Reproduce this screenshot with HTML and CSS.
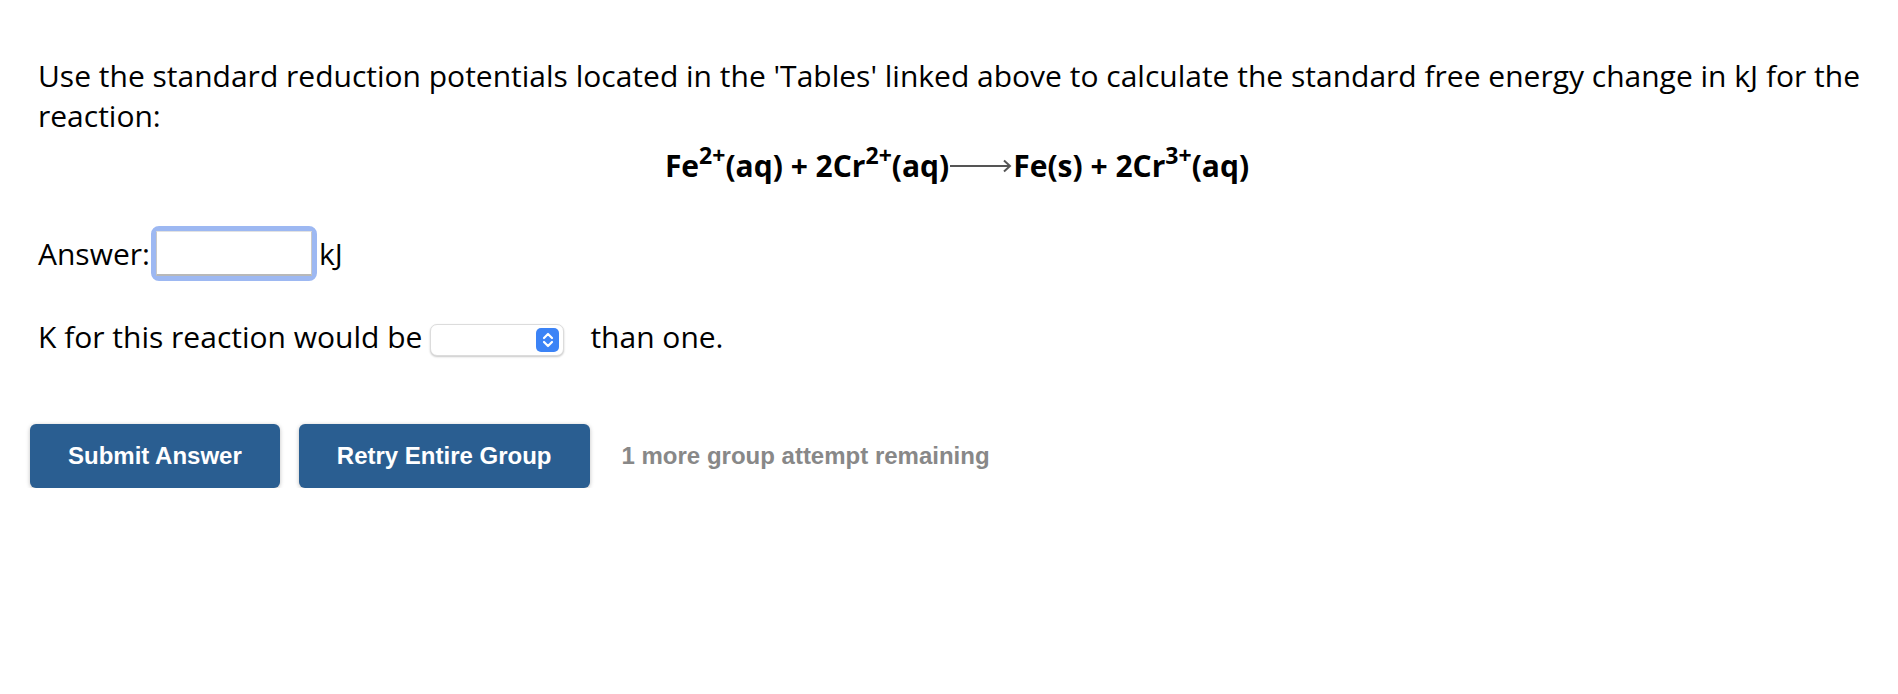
FILE: index.html
```html
<!DOCTYPE html>
<html lang="en">
<head>
<meta charset="utf-8">
<title>Question</title>
<link rel="stylesheet" href="styles.css">
</head>
<body>
<div class="page">
  <div class="question">
    <p class="prompt">Use the standard reduction potentials located in the 'Tables' linked above to calculate the standard free energy change in kJ for the reaction:</p>
    <div class="equation">Fe<sup>2+</sup>(aq) + 2Cr<sup>2+</sup>(aq)<svg class="arrow" width="62" height="14" viewBox="0 0 62 14"><line x1="0" y1="7" x2="60" y2="7" stroke="#555" stroke-width="2"/><polyline points="54,1.5 60,7 54,12.5" fill="none" stroke="#555" stroke-width="2"/></svg>Fe(s) + 2Cr<sup>3+</sup>(aq)</div>
    <div class="row answer-row">
      <span class="label">Answer:</span>
      <span class="ring"><input class="answer" type="text"></span>
      <span class="unit">kJ</span>
    </div>
    <div class="row k-row">
      <span class="label">K for this reaction would be</span>
      <span class="select">
        <span class="select-btn">
          <svg width="14" height="18" viewBox="0 0 14 18"><polyline points="3,7 7,3 11,7" fill="none" stroke="#fff" stroke-width="2.2" stroke-linecap="round" stroke-linejoin="round"/><polyline points="3,11 7,15 11,11" fill="none" stroke="#fff" stroke-width="2.2" stroke-linecap="round" stroke-linejoin="round"/></svg>
        </span>
      </span>
      <span class="after">than one.</span>
    </div>
  </div>
  <div class="actions">
    <button class="btn" type="button">Submit Answer</button>
    <button class="btn" type="button">Retry Entire Group</button>
    <span class="remaining">1 more group attempt remaining</span>
  </div>
</div>
</body>
</html>
```
FILE: styles.css
```css
html, body {
  margin: 0;
  padding: 0;
  background: #fff;
}
.page {
  padding: 56px 22px 0 30px;
  font-family: "Open Sans", "Liberation Sans", sans-serif;
  font-size: 30px;
  line-height: 40px;
  color: #000;
}
.question {
  padding-left: 8px;
}
.prompt {
  margin: 0;
}
.equation {
  margin-top: 10px;
  text-align: center;
  font-weight: 700;
  font-size: 30px;
}
.equation sup {
  font-size: 23px;
  line-height: 0;
  vertical-align: 13px;
}
.arrow {
  display: inline-block;
  vertical-align: 4px;
  margin: 0 1px;
}
.row {
  display: flex;
  align-items: center;
}
.answer-row {
  margin-top: 40px;
}
.ring {
  display: inline-flex;
  margin-left: 1px;
  border: 5px solid #9db8f2;
  border-radius: 8px;
}
.answer {
  width: 156px;
  height: 45px;
  box-sizing: border-box;
  margin: 0;
  border: 1px solid #c9c9c9;
  border-top-color: #e2e2e2;
  border-bottom: 2px solid #b8b8b8;
  background: #fff;
  outline: none;
  padding: 0;
}
.unit {
  margin-left: 2px;
}
.k-row {
  margin-top: 36px;
}
.select {
  display: inline-flex;
  justify-content: flex-end;
  align-items: center;
  box-sizing: border-box;
  width: 134px;
  height: 32px;
  margin-left: 8px;
  margin-top: 6px;
  padding-right: 4px;
  border: 1px solid #dcdcdc;
  border-radius: 7px;
  background: #fff;
  box-shadow: 0 1px 2px rgba(0, 0, 0, 0.22);
}
.select-btn {
  display: flex;
  align-items: center;
  justify-content: center;
  width: 23px;
  height: 24px;
  border-radius: 5px;
  background: #3c83f6;
}
.select-btn svg {
  display: block;
}
.after {
  margin-left: 26px;
}
.actions {
  display: flex;
  align-items: center;
  gap: 19px;
  margin-top: 67px;
}
.btn {
  height: 64px;
  padding: 0 38px;
  border: none;
  border-radius: 6px;
  background: #2a5e91;
  color: #fff;
  font-family: "Liberation Sans", Arial, sans-serif;
  font-weight: 700;
  font-size: 24px;
  box-shadow: 0 1px 4px rgba(0, 0, 0, 0.25);
  cursor: pointer;
}
.remaining {
  margin-left: 13px;
  font-family: "Liberation Sans", Arial, sans-serif;
  font-weight: 700;
  font-size: 24px;
  color: #888;
}
```
